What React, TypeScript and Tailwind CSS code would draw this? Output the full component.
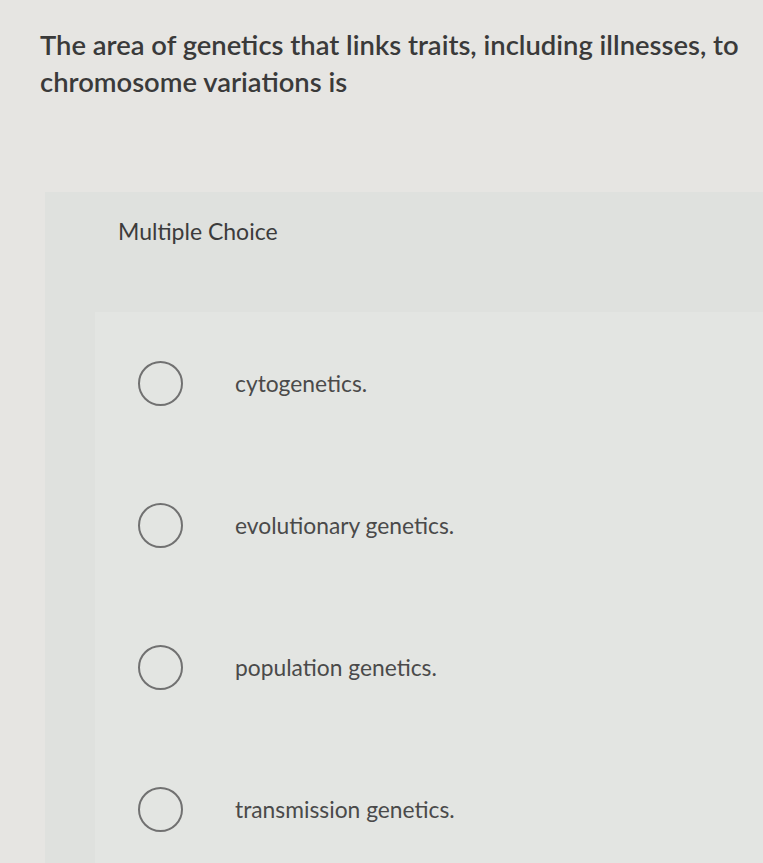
import React from 'react';

const options = [
  'cytogenetics.',
  'evolutionary genetics.',
  'population genetics.',
  'transmission genetics.',
];

export default function App() {
  return (
    <div
      className="w-[763px] h-[863px] overflow-hidden bg-[#e6e5e2] text-[#3a3a3a]"
      style={{ fontFamily: 'Lato, "Open Sans", sans-serif' }}
    >
      {/* Question */}
      <div className="pl-[40px] pr-[10px] pt-[26px] h-[192px]">
        <p className="text-[27.4px] leading-[37px] font-semibold">
          The area of genetics that links traits, including illnesses, to chromosome variations is
        </p>
      </div>

      {/* Answer panel */}
      <div className="ml-[45px] bg-[#dfe1de] h-[700px] pt-[24px]">
        <div className="pl-[73px] text-[23px] leading-[30px] text-[#3c3c3c]">Multiple Choice</div>

        <div className="mt-[66px] ml-[50px] flex flex-col">
          {options.map((label) => (
            <div key={label} className="h-[142px] bg-[#e3e5e2] flex items-center pl-[43px]">
              <span className="w-[45px] h-[45px] rounded-full border-2 border-[#717171] shrink-0" />
              <span className="ml-[52px] text-[22.8px] text-[#4a4a4a]">{label}</span>
            </div>
          ))}
        </div>
      </div>
    </div>
  );
}
